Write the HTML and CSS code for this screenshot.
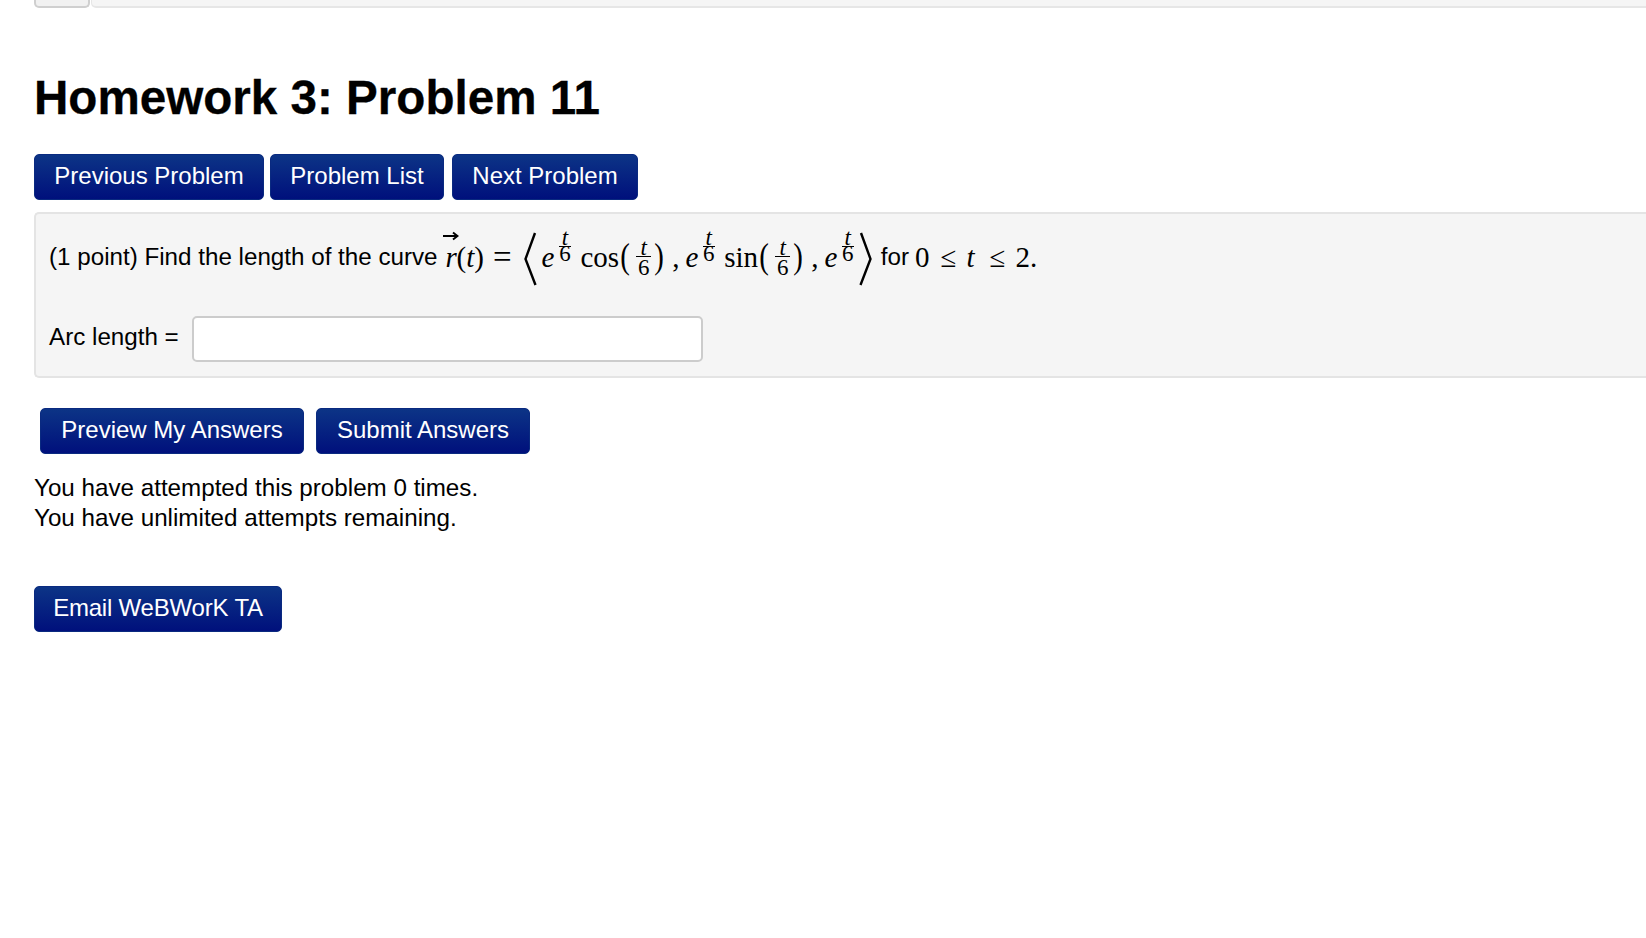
FILE: index.html
```html
<!DOCTYPE html>
<html lang="en">
<head>
<meta charset="utf-8">
<title>Homework 3: Problem 11</title>
<link rel="stylesheet" href="styles.css">
</head>
<body>
<nav class="tabs"><span class="tab-btn"></span><span class="tab-bar"></span></nav>
<main class="page">
  <h1 class="title">Homework 3: Problem 11</h1>
  <div class="btn-row nav-row">
    <a class="btn b-prev">Previous Problem</a>
    <a class="btn b-list">Problem List</a>
    <a class="btn b-next">Next Problem</a>
  </div>
  <section class="well">
    <div class="problem">
      <span class="lead">(1 point) Find the length of the curve</span>
      <span class="math">
        <span class="vec"><svg class="arrow" width="16" height="10" viewBox="0 0 16 10"><path d="M0 5H14M10 1.5L14.5 5L10 8.5" fill="none" stroke="#000" stroke-width="2"/></svg><i>r</i></span>
        <span class="fn">(<i>t</i>)</span>
        <span class="eq">=</span>
        <svg class="angle" width="14" height="54" viewBox="0 0 14 54"><path d="M12 1L2.5 27L12.5 53" fill="none" stroke="#000" stroke-width="2.4"/></svg>
        <i class="e e1">e</i>
        <span class="exp"><i>t</i><b class="rule"></b><span class="six">6</span></span>
        <span class="word w-cos">cos</span>
        <span class="paren">(</span><span class="frac"><i>t</i><b class="rule"></b><span>6</span></span><span class="paren">)</span>
        <span class="comma">,</span>
        <i class="e">e</i>
        <span class="exp"><i>t</i><b class="rule"></b><span class="six">6</span></span>
        <span class="word w-sin">sin</span>
        <span class="paren">(</span><span class="frac"><i>t</i><b class="rule"></b><span>6</span></span><span class="paren">)</span>
        <span class="comma">,</span>
        <i class="e">e</i>
        <span class="exp"><i>t</i><b class="rule"></b><span class="six">6</span></span>
        <svg class="angle angle-r" width="14" height="54" viewBox="0 0 14 54"><path d="M2 1L11.5 27L1.5 53" fill="none" stroke="#000" stroke-width="2.4"/></svg>
      </span>
      <span class="lead for">for</span>
      <span class="math tail"><span>0</span><span class="le le-a">≤</span><i class="tvar">t</i><span class="le">≤</span><span>2.</span></span>
    </div>
    <div class="answer">
      <label class="lead label" for="arc">Arc length =</label>
      <input id="arc" class="field" type="text">
    </div>
  </section>
  <div class="btn-row submit-row">
    <a class="btn b-preview">Preview My Answers</a>
    <a class="btn b-submit">Submit Answers</a>
  </div>
  <p class="attempts">You have attempted this problem 0 times.<br>You have unlimited attempts remaining.</p>
  <a class="btn b-email">Email WeBWorK TA</a>
</main>
</body>
</html>
```
FILE: styles.css
```css
* { box-sizing: border-box; }
html, body { margin: 0; height: 100%; overflow: hidden; background: #fff; }
body { font-family: "Liberation Sans", Arial, sans-serif; color: #000; font-size: 24px; }

.tabs { display: flex; gap: 1px; height: 8px; padding-left: 34px; }
.tab-btn { width: 56px; background: #f1f1f1; border: 2px solid #cfcfcf; border-top: 0; border-radius: 0 0 5px 5px; }
.tab-bar { flex: 1; background: #f5f5f5; border-bottom: 2px solid #e6e6e6; border-left: 1px solid #e6e6e6; border-radius: 0 0 0 5px; }

.page { padding-left: 34px; }
.title { margin: 0; padding-top: 63px; height: 146px; font-size: 47.6px; line-height: 54px; font-weight: 700; -webkit-text-stroke: .3px #000; }

.btn-row { display: flex; }
.btn { display: flex; align-items: center; justify-content: center; height: 46px; padding-bottom: 2px; color: #fff; font-size: 24px; border-radius: 5px; background: linear-gradient(#0c3486, #00107c); border: 1px solid #0a2a80; white-space: nowrap; }
.nav-row { gap: 6px; }
.b-prev { width: 230px; }
.b-list { width: 174px; }
.b-next { width: 186px; margin-left: 2px; }

.well { margin-top: 12px; height: 166px; background: #f5f5f5; border: 2px solid #e4e4e4; border-right: 0; border-radius: 5px 0 0 5px; padding-left: 13px; }
.problem { display: flex; align-items: center; height: 84px; padding-top: 2px; white-space: nowrap; }
.lead { font-size: 24.2px; }
.for { margin-left: 8px; }
.math { display: flex; align-items: center; font-family: "Liberation Serif", "Times New Roman", serif; font-size: 29px; }
.vec { position: relative; margin-left: 8px; width: 11px; }
.arrow { position: absolute; left: -3px; top: -10px; }
.eq { margin: 0 11px 0 9px; font-size: 33px; line-height: 1; }
.angle { flex: none; margin-top: 3px; }
.e1 { margin-left: 5px; }
.exp, .frac { display: flex; flex-direction: column; align-items: center; line-height: 1; }
.exp { font-size: 23px; width: 12px; margin: -22px 0 0 4.5px; }
.exp i { height: 17px; line-height: 17px; }
.frac i { height: 17px; line-height: 17px; }
.rule { display: block; width: 100%; height: 1px; background: #000; flex: none; }
.six { height: 16px; line-height: 14px; }
.word { margin-left: 9.5px; }
.paren { font-size: 36px; font-weight: 400; transform: scaleX(.8); margin-top: -2px; }
.frac { font-size: 23px; width: 15px; margin: 2px 2px 0 5px; }
.frac span { height: 20px; line-height: 22px; }
.comma { margin: 0 6px 0 7px; }
.angle-r { margin-left: 5px; }
.tail { margin-left: 6px; gap: 9px; }
.le { margin: 0 1px; }
.le-a { margin-left: 2px; }
.tvar { margin-right: 5px; }

.answer { display: flex; align-items: center; height: 46px; margin-top: 18px; }
.label { padding-bottom: 4px; }
.field { width: 511px; height: 46px; margin-left: 13px; background: #fff; border: 2px solid #ccc; border-radius: 5px; padding: 0; }

.submit-row { gap: 12px; margin: 30px 0 0 6px; }
.b-preview { width: 264px; }
.b-submit { width: 214px; }

.attempts { margin: 19px 0 0; font-size: 24.2px; line-height: 30px; }
.b-email { width: 248px; margin-top: 53px; letter-spacing: -.2px; padding-bottom: 3px; }
```
